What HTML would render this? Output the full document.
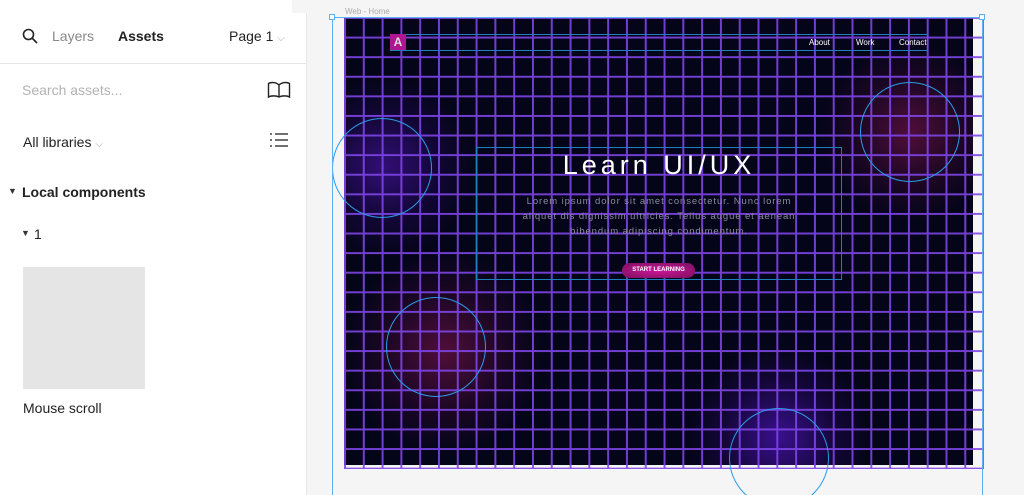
<!DOCTYPE html>
<html style="width:1024px;height:495px;overflow:hidden"><head><style>
*{margin:0;padding:0;box-sizing:border-box}
body{width:1024px;height:495px;background:#f5f5f5;font-family:"Liberation Sans",sans-serif;position:relative;overflow:hidden}
.panel{position:absolute;left:0;top:0;width:307px;height:495px;background:#fff;border-right:1px solid #e6e6e6}
.t{position:absolute;font-size:14px;color:#222;white-space:nowrap}
.frame{position:absolute;left:344px;top:17px;width:629px;height:448px;background:#05051a;overflow:hidden}
.grid{position:absolute;left:344px;top:17px;width:640px;height:452px;
background-image:linear-gradient(to right,#7e45e6 2px,transparent 2px),linear-gradient(to bottom,#7e45e6 2px,transparent 2px);
background-size:18.8px 19.6px;opacity:.9}
.glow{position:absolute;border-radius:50%}
.circ{position:absolute;border:1px solid #2a9be8;border-radius:50%}
.clip{position:absolute;left:0;top:0;width:1024px;height:495px;overflow:hidden}
</style></head><body><div class="clip">
<div class="panel">
<svg style="position:absolute;left:22px;top:28px" width="16" height="16" viewBox="0 0 16 16"><circle cx="6.5" cy="6.5" r="5" fill="none" stroke="#222" stroke-width="1.6"/><line x1="10" y1="10" x2="15" y2="15" stroke="#222" stroke-width="1.6"/></svg>
<div class="t" style="left:52px;top:28px;color:#888">Layers</div>
<div class="t" style="left:118px;top:28px;font-weight:bold">Assets</div>
<div class="t" style="left:229px;top:28px">Page 1 <span style="color:#aaa;font-size:10px">⌵</span></div>
<div style="position:absolute;left:0;top:63px;width:307px;height:1px;background:#e6e6e6"></div>
<div class="t" style="left:22px;top:82px;color:#b3b3b3">Search assets...</div>
<svg style="position:absolute;left:267px;top:81px" width="24" height="18" viewBox="0 0 24 18"><path d="M12 4C9 1 4 1 1.5 2.5V16C4 14.5 9 14.5 12 16C15 14.5 20 14.5 22.5 16V2.5C20 1 15 1 12 4V16" fill="none" stroke="#222" stroke-width="1.4"/></svg>
<div class="t" style="left:23px;top:134px">All libraries <span style="color:#aaa;font-size:10px">⌵</span></div>
<svg style="position:absolute;left:270px;top:132px" width="18" height="16" viewBox="0 0 18 16"><g stroke="#222" stroke-width="1.3"><line x1="0" y1="2" x2="2" y2="2"/><line x1="5" y1="2" x2="18" y2="2"/><line x1="0" y1="8" x2="2" y2="8"/><line x1="5" y1="8" x2="18" y2="8"/><line x1="0" y1="14" x2="2" y2="14"/><line x1="5" y1="14" x2="18" y2="14"/></g></svg>
<div class="t" style="left:8px;top:186px;font-size:9px;color:#333">▼</div>
<div class="t" style="left:22px;top:184px;font-weight:bold">Local components</div>
<div class="t" style="left:21px;top:228px;font-size:9px;color:#333">▼</div>
<div class="t" style="left:34px;top:226px">1</div>
<div style="position:absolute;left:23px;top:267px;width:122px;height:122px;background:#e5e5e5"></div>
<div class="t" style="left:23px;top:400px">Mouse scroll</div>
</div>
<div style="position:absolute;left:292px;top:0;width:15px;height:13px;background:#f5f5f5"></div>
<div style="position:absolute;left:345px;top:7px;font-size:8px;color:#aaa">Web - Home</div>
<div class="frame">
<div class="glow" style="left:-50px;top:60px;width:180px;height:180px;background:radial-gradient(circle,rgba(80,20,180,.6),rgba(60,10,140,.2) 45%,transparent 70%)"></div>
<div class="glow" style="left:476px;top:25px;width:180px;height:180px;background:radial-gradient(circle,rgba(130,20,80,.6),rgba(100,10,70,.2) 45%,transparent 70%)"></div>
<div class="glow" style="left:0px;top:235px;width:200px;height:200px;background:radial-gradient(circle,rgba(130,20,80,.6),rgba(100,10,70,.2) 45%,transparent 70%)"></div>
<div class="glow" style="left:345px;top:330px;width:180px;height:180px;background:radial-gradient(circle,rgba(80,20,190,.7),rgba(60,10,140,.25) 45%,transparent 70%)"></div>
</div>
<div class="grid"></div>
<div style="position:absolute;left:390px;top:34px;width:538px;height:17px;border:1px solid #1e7fc0"></div>
<div style="position:absolute;left:390px;top:34px;width:16px;height:16px;background:#b0168f;color:#ddd;font-size:12px;text-align:center;line-height:16px;font-weight:bold">A</div>
<div style="position:absolute;left:809px;top:38px;font-size:8px;color:#fff">About</div>
<div style="position:absolute;left:856px;top:38px;font-size:8px;color:#fff">Work</div>
<div style="position:absolute;left:899px;top:38px;font-size:8px;color:#fff">Contact</div>
<div style="position:absolute;left:476px;top:147px;width:366px;height:133px;border:1px solid #1e7fc0"></div>
<div style="position:absolute;left:476px;top:150px;width:366px;text-align:center;font-size:27px;letter-spacing:4px;color:#fff">Learn UI/UX</div>
<div style="position:absolute;left:512px;top:194px;width:294px;text-align:center;font-size:9.5px;line-height:15px;letter-spacing:.9px;color:#8a8a9a">Lorem ipsum dolor sit amet consectetur. Nunc lorem aliquet dis dignissim ultricies. Tellus augue et aenean bibendum adipiscing condimentum.</div>
<div style="position:absolute;left:622px;top:263px;width:73px;height:15px;border-radius:8px;background:radial-gradient(ellipse,#d0169a,#7a1060);color:#fff;font-size:6px;font-weight:bold;text-align:center;line-height:15px">START LEARNING</div>
<div class="circ" style="left:332px;top:118px;width:100px;height:100px"></div>
<div class="circ" style="left:860px;top:82px;width:100px;height:100px"></div>
<div class="circ" style="left:386px;top:297px;width:100px;height:100px"></div>
<div class="circ" style="left:729px;top:408px;width:100px;height:100px"></div>
<div style="position:absolute;left:332px;top:17px;width:1px;height:478px;background:#5ab0f5"></div>
<div style="position:absolute;left:982px;top:17px;width:1px;height:478px;background:#5ab0f5"></div>
<div style="position:absolute;left:332px;top:17px;width:650px;height:1px;background:#5ab0f5"></div>
<div style="position:absolute;left:329px;top:14px;width:6px;height:6px;background:#fff;border:1px solid #5ab0f5"></div>
<div style="position:absolute;left:979px;top:14px;width:6px;height:6px;background:#fff;border:1px solid #5ab0f5"></div>
</div></body></html>
